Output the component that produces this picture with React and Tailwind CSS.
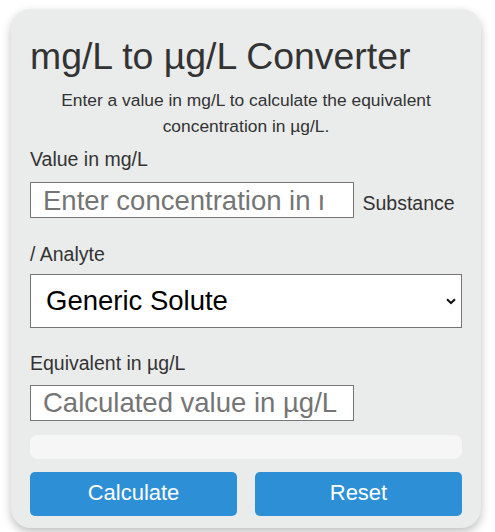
import React from "react";

export default function App() {
  const font = { fontFamily: '"Liberation Sans", Arial, sans-serif' };
  return (
    <div className="min-h-[532px] bg-white pt-[9px] pl-[11px]" style={font}>
      <div className="w-[470px] rounded-[20px] bg-[#eaebeb] px-[19px] pt-[26px] pb-[12px] shadow-[0_4px_10px_rgba(0,0,0,0.25)]">
        <h1 className="text-[37.4px] leading-[42px] text-[#333333] font-normal">
          mg/L to µg/L Converter
        </h1>
        <p className="mt-[9.5px] text-center text-[17.4px] leading-[26px] text-[#333333]">
          Enter a value in mg/L to calculate the equivalent
          <br />
          concentration in µg/L.
        </p>
        <label className="mt-[6.5px] block text-[19.5px] leading-[1.5] text-[#333333]">
          Value in mg/L
        </label>
        <div className="mt-[8px] flex items-baseline gap-[8.5px]">
          <input
            type="text"
            placeholder="Enter concentration in mg/L"
            className="h-[36px] w-[324px] border border-[#767676] bg-white pl-[12px] pr-[30px] text-[27.5px] text-black placeholder:text-[#757575] outline-none"
            style={font}
          />
          <span className="text-[19.5px] text-[#333333]">Substance</span>
        </div>
        <label className="mt-[22px] block text-[19.5px] leading-[1.5] text-[#333333]">
          / Analyte
        </label>
        <div className="relative mt-[4px]">
          <select
            className="h-[54px] w-full appearance-none border border-[#767676] bg-white pl-[15px] text-[27.5px] text-black outline-none"
            style={font}
            defaultValue="generic"
          >
            <option value="generic">Generic Solute</option>
          </select>
          <svg
            className="pointer-events-none absolute right-[6px] top-[24px]"
            width="10"
            height="7"
            viewBox="0 0 10 7"
          >
            <path d="M1 1.2 L5 5 L9 1.2" fill="none" stroke="#111" strokeWidth="2" />
          </svg>
        </div>
        <label className="mt-[21px] block text-[19.5px] leading-[1.5] text-[#333333]">
          Equivalent in µg/L
        </label>
        <div className="mt-[7px]">
          <input
            type="text"
            readOnly
            placeholder="Calculated value in µg/L"
            className="h-[36px] w-[324px] border border-[#767676] bg-white pl-[12px] pr-[12px] text-[27.5px] text-black placeholder:text-[#757575] outline-none"
            style={font}
          />
        </div>
        <div className="mt-[14px] h-[24px] w-full rounded-[8px] bg-[#f6f6f6]"></div>
        <div className="mt-[13px] flex gap-[18px]">
          <button
            className="h-[44px] flex-1 rounded-[5px] bg-[#2d8fd6] pb-[3px] text-[22px] text-white"
            style={font}
          >
            Calculate
          </button>
          <button
            className="h-[44px] flex-1 rounded-[5px] bg-[#2d8fd6] pb-[3px] text-[22px] text-white"
            style={font}
          >
            Reset
          </button>
        </div>
      </div>
    </div>
  );
}
